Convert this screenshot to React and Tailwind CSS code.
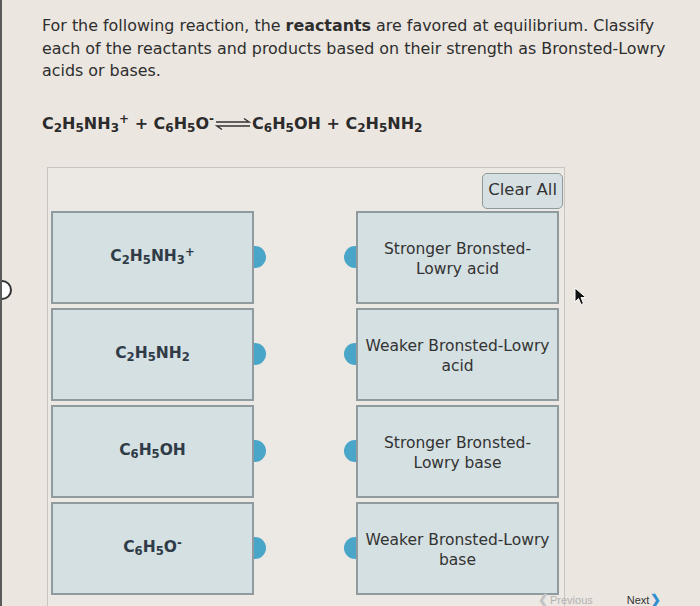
import React from 'react';

const FONT = { fontFamily: '"DejaVu Sans", Verdana, sans-serif' };

const species = [
  { key: 'a', label: <>C<sub>2</sub>H<sub>5</sub>NH<sub>3</sub><sup>+</sup></> },
  { key: 'b', label: <>C<sub>2</sub>H<sub>5</sub>NH<sub>2</sub></> },
  { key: 'c', label: <>C<sub>6</sub>H<sub>5</sub>OH</> },
  { key: 'd', label: <>C<sub>6</sub>H<sub>5</sub>O<sup>-</sup></> },
];

const targets = [
  ['Stronger Bronsted-', 'Lowry acid'],
  ['Weaker Bronsted-Lowry', 'acid'],
  ['Stronger Bronsted-', 'Lowry base'],
  ['Weaker Bronsted-Lowry', 'base'],
];

function EqArrow() {
  return (
    <svg width="36" height="12" viewBox="0 0 36 12" className="mx-[1px] inline-block">
      <path d="M1 4 H34 L29 0.5" fill="none" stroke="#333" strokeWidth="1.3" />
      <path d="M35 8 H2 L7 11.5" fill="none" stroke="#333" strokeWidth="1.3" />
    </svg>
  );
}

function Dot({ side }) {
  return side === 'right' ? (
    <div className="w-[12px] h-[22px] rounded-r-full bg-[#4aa6c8]" />
  ) : (
    <div className="w-[12px] h-[22px] rounded-l-full bg-[#4aa6c8]" />
  );
}

function Cursor() {
  return (
    <svg width="14" height="20" viewBox="0 0 14 20" className="absolute left-[572px] top-[287px]">
      <path d="M1 1 L1 15 L4.5 11.5 L7 17.5 L9.5 16.5 L7 10.5 L12 10.5 Z" fill="#111" stroke="#fff" strokeWidth="1" />
    </svg>
  );
}

export default function App() {
  return (
    <div
      className="relative w-[700px] h-[606px] overflow-hidden bg-[#ebe6e0] border-l-2 border-[#5a5a5a] text-[#2e2e2e]"
      style={FONT}
    >
      {/* side nav handle */}
      <div className="absolute left-[-10px] top-[280px] w-[20px] h-[20px] rounded-full bg-white border-2 border-[#333]" />

      <p className="pl-[40px] pr-[20px] pt-[15px] text-[15.9px] leading-[22.5px]">
        For the following reaction, the <b>reactants</b> are favored at equilibrium. Classify
        each of the reactants and products based on their strength as Bronsted-Lowry acids or bases.
      </p>

      <div className="pl-[40px] mt-[29px] flex items-center font-bold text-[16px] text-[#2b2b2b] h-[24px]">
        <span>
          C<sub>2</sub>H<sub>5</sub>NH<sub>3</sub><sup>+</sup> + C<sub>6</sub>H<sub>5</sub>O<sup>-</sup>
        </span>
        <EqArrow />
        <span>
          C<sub>6</sub>H<sub>5</sub>OH + C<sub>2</sub>H<sub>5</sub>NH<sub>2</sub>
        </span>
      </div>

      <div className="ml-[45px] mt-[31px] w-[518px] h-[440px] border border-[#c9c6c1] bg-[#ece8e3]">
        <div className="flex justify-end pr-[1px] pt-[5px] h-[43px]">
          <button className="h-[36px] px-[5px] rounded-[5px] border border-[#8e9a9e] bg-[#d6e0e2] text-[16.5px] text-[#333]">
            Clear All
          </button>
        </div>

        <div className="flex flex-col gap-[4px] pl-[3px]">
          {species.map((s, i) => (
            <div key={s.key} className="flex items-center h-[93px]">
              <div className="w-[203px] h-full flex items-center justify-center border-2 border-[#8f9b9e] bg-[#d5e0e2] font-bold text-[15.5px] text-[#2f3c47]">
                <span>{s.label}</span>
              </div>
              <Dot side="right" />
              <div className="w-[78px]" />
              <Dot side="left" />
              <div className="w-[203px] h-full flex flex-col items-center justify-center pt-[4px] border-2 border-[#8f9b9e] bg-[#d5e0e2] text-[15.5px] leading-[20px] text-[#333] text-center">
                <span>{targets[i][0]}</span>
                <span>{targets[i][1]}</span>
              </div>
            </div>
          ))}
        </div>
      </div>

      <div className="absolute left-[536px] top-[594px] flex items-center text-[11px] leading-[12px]" style={{ fontFamily: '"Liberation Sans", Arial, sans-serif' }}>
        <span className="text-[#c4c4c4] text-[13px] font-bold">&#10094;</span>
        <span className="text-[#b3b3b3] ml-[1px]">Previous</span>
        <span className="text-[#333] ml-[34px]">Next</span>
        <span className="text-[#2f8fd0] text-[13px] font-bold ml-[1px]">&#10095;</span>
      </div>

      <Cursor />
    </div>
  );
}
